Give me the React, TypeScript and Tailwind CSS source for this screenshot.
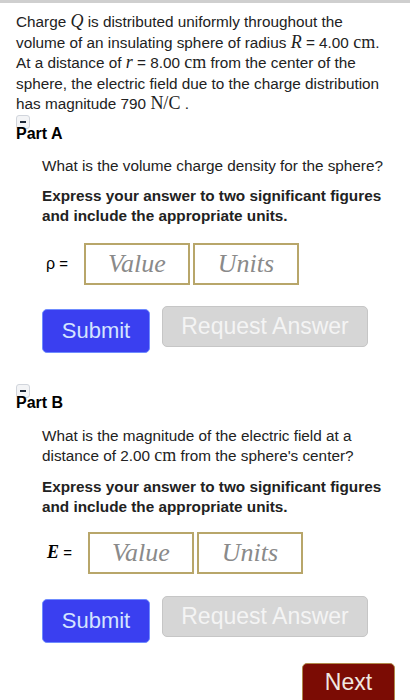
import React from 'react';

const sans = { fontFamily: '"Liberation Sans", Arial, sans-serif' };

function M({ children, italic = false }: { children: React.ReactNode; italic?: boolean }) {
  return (
    <span
      className={`font-['Liberation_Serif',serif] text-[18px] leading-none ${italic ? 'italic' : ''}`}
    >
      {children}
    </span>
  );
}

function PartHeader({ label }: { label: string }) {
  return (
    <div className="relative pl-4 pt-[10px]">
      <div className="absolute left-[16px] top-0 h-[14px] w-[14px] rounded-[3px] border border-gray-300 bg-gray-100">
        <div className="mx-auto mt-[5px] h-[2px] w-[6px] bg-gray-800" />
      </div>
      <div className="relative text-[16px] font-bold leading-[18px] text-black">{label}</div>
    </div>
  );
}

function AnswerRow({ symbol, serifSymbol }: { symbol: string; serifSymbol?: boolean }) {
  return (
    <div className="flex items-center">
      <span
        className={`text-[15px] text-black ${serifSymbol ? 'w-[46px] pl-[5px]' : 'w-[42px] pl-[4px]'}`}
      >
        {serifSymbol ? (
          <span className="font-['Liberation_Serif',serif] text-[18px] font-bold italic">{symbol}</span>
        ) : (
          <span className="text-[16px]">{symbol}</span>
        )}{' '}
        =
      </span>
      <div className="flex h-[42px] w-[106px] items-center justify-center border-2 border-[#b8a66a] font-['Liberation_Serif',serif] text-[26px] italic text-[#8a8a8a]">
        Value
      </div>
      <div className="ml-[3px] flex h-[42px] w-[106px] items-center justify-center border-2 border-[#b8a66a] font-['Liberation_Serif',serif] text-[26px] italic text-[#8a8a8a]">
        Units
      </div>
    </div>
  );
}

function Buttons() {
  return (
    <div className="flex items-start gap-3">
      <button className="mt-[3px] h-[44px] w-[108px] rounded-[5px] border border-[#6f8cff] bg-[#3a3ff0] text-[22px] text-[#d4e4ff]">
        Submit
      </button>
      <button className="h-[41px] w-[206px] rounded-[5px] border border-[#c6c6c6] bg-[#d6d6d6] text-[23px] text-[#f4f4f4]">
        Request Answer
      </button>
    </div>
  );
}

export default function App() {
  return (
    <div className="relative h-[700px] w-[417px] overflow-hidden bg-white text-[#222]" style={sans}>
      <div className="h-[3px] w-[410px] bg-[#cfcfcf]" />
      <p className="px-4 pt-[9px] text-[15.3px] leading-[20.5px]">
        Charge <M italic>Q</M> is distributed uniformly throughout the
        <br />
        volume of an insulating sphere of radius <M italic>R</M> = 4.00 <M>cm</M>.
        <br />
        At a distance of <M italic>r</M> = 8.00 <M>cm</M> from the center of the
        <br />
        sphere, the electric field due to the charge distribution
        <br />
        has magnitude 790 <M>N/C</M> .
      </p>

      <PartHeader label="Part A" />

      <div className="pl-[42px] pr-2">
        <p className="mt-[13px] text-[15.3px] leading-[20px]">
          What is the volume charge density for the sphere?
        </p>
        <p className="mt-[10px] text-[15.3px] font-bold leading-[20px]">
          Express your answer to two significant figures
          <br />
          and include the appropriate units.
        </p>
        <div className="mt-[17px]">
          <AnswerRow symbol="ρ" />
        </div>
        <div className="mt-[21px]">
          <Buttons />
        </div>
      </div>

      <div className="mt-[31px]">
        <PartHeader label="Part B" />
      </div>

      <div className="pl-[42px] pr-2">
        <p className="mt-[14px] text-[15.3px] leading-[20px]">
          What is the magnitude of the electric field at a
          <br />
          distance of 2.00 <M>cm</M> from the sphere's center?
        </p>
        <p className="mt-[11px] text-[15.3px] font-bold leading-[20px]">
          Express your answer to two significant figures
          <br />
          and include the appropriate units.
        </p>
        <div className="mt-[15px]">
          <AnswerRow symbol="E" serifSymbol />
        </div>
        <div className="mt-[22px]">
          <Buttons />
        </div>
      </div>

      <div className="mt-[20px] flex justify-end pr-[22px]">
        <button className="h-[46px] w-[93px] rounded-[5px] border border-[#b08a4a] bg-[#7b0c04] pb-[6px] text-[23px] text-[#f0e8e0]">
          Next
        </button>
      </div>
    </div>
  );
}
